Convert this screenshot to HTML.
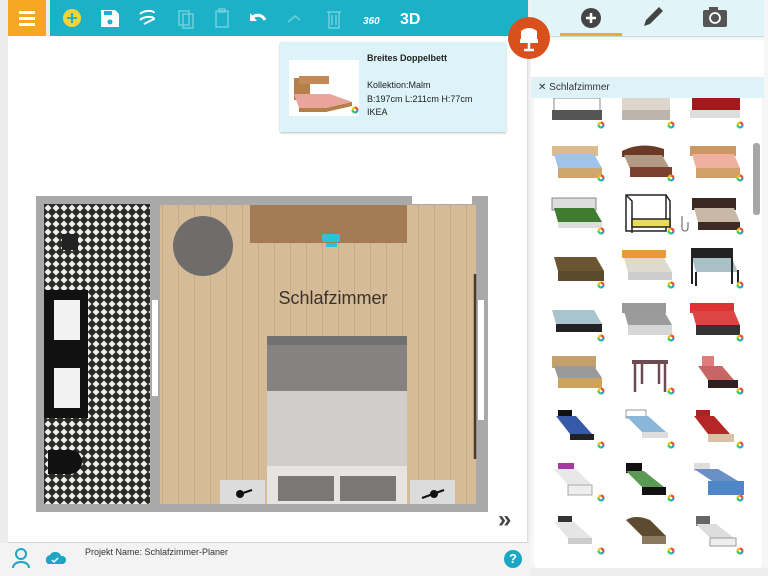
<!DOCTYPE html>
<html><head><meta charset="utf-8"><style>
*{margin:0;padding:0;box-sizing:border-box}
body{width:768px;height:576px;overflow:hidden;background:#ececec;font-family:"Liberation Sans",sans-serif;position:relative}
.a{position:absolute}
</style></head><body>
<div class="a" style="left:8px;top:36px;width:520px;height:507px;background:#fff;border-right:1px solid #ddd;border-bottom:1px solid #d4d4d4"></div>
<div class="a" style="left:0;top:543px;width:530px;height:33px;background:#f3f3f3"></div>
<div class="a" style="left:8px;top:0;width:38px;height:36px;background:#f7a823"></div>
<div class="a" style="left:19px;top:11px;width:16px;height:3px;background:#fff;box-shadow:0 6px 0 #fff,0 12px 0 #fff"></div>
<div class="a" style="left:50px;top:0;width:478px;height:36px;background:#1bb2c8"></div>
<svg class="a" style="left:50px;top:0" width="478" height="36">
 <circle cx="22" cy="18" r="9" fill="#f3d33b"/><path d="M22 13v10M17 18h10" stroke="#1bb2c8" stroke-width="2"/>
 <path d="M51 10h14l4 4v13h-18z" fill="#fff"/><rect x="54" y="11" width="8" height="4" fill="#1bb2c8"/><circle cx="60" cy="22" r="2.5" fill="#1bb2c8"/>
 <path d="M90 14c4-4 14-4 14-1M90 20c4-4 14-4 14-1l-10 5" stroke="#fff" stroke-width="2" fill="none"/>
 <g stroke="#6fd0de" stroke-width="1.5" fill="none"><rect x="129" y="11" width="10" height="14"/><rect x="133" y="14" width="10" height="14"/>
 <rect x="166" y="11" width="12" height="16"/><rect x="169" y="9" width="6" height="3"/>
 <path d="M238 22l7-6 5 4" /><path d="M279 12v16h10V12zM277 12h14M282 15v10M286 15v10"/></g>
 <path d="M202 18c3-4 10-4 13 2" stroke="#fff" stroke-width="3" fill="none"/><path d="M200 13v8h7z" fill="#fff"/>
 <text x="313" y="24" font-size="10" font-style="italic" fill="#fff" font-weight="bold">360</text>
 <text x="350" y="24" font-size="16" fill="#fff" font-weight="bold">3D</text>
</svg>
<div class="a" style="left:530px;top:0;width:238px;height:576px;background:#f6f6f6"></div>
<div class="a" style="left:531px;top:0;width:233px;height:37px;background:#e1f4f8;border-bottom:1px solid #c9d9dd"></div>
<div class="a" style="left:560px;top:33px;width:62px;height:3px;background:#f0a92d"></div>
<svg class="a" style="left:530px;top:0" width="238" height="100">
 <circle cx="61" cy="18" r="10" fill="#444"/><path d="M61 13v10M56 18h10" stroke="#fff" stroke-width="2.5"/>
 <path d="M114 26l2-6 13-13 4 4-13 13z" fill="#444"/>
 <rect x="173" y="10" width="24" height="17" rx="2" fill="#555"/><rect x="179" y="7" width="9" height="4" fill="#555"/><circle cx="185" cy="18" r="5" fill="none" stroke="#fff" stroke-width="1.8"/>
 <g fill="#2bb0c6"><rect x="33" y="50" width="5" height="4"/><rect x="40" y="50" width="5" height="4"/><rect x="47" y="50" width="5" height="4"/><rect x="33" y="56" width="5" height="4"/><rect x="40" y="56" width="5" height="4"/><rect x="47" y="56" width="5" height="4"/><rect x="33" y="62" width="5" height="4"/></g>
 <path d="M82 54c0-6 8-6 9-1 1-5 9-5 9 1 0 5-9 10-9 12-0-2-9-7-9-12z" fill="none" stroke="#444" stroke-width="2"/>
 <circle cx="207" cy="56" r="6" fill="none" stroke="#444" stroke-width="2.2"/><path d="M211 60l5 5" stroke="#444" stroke-width="2.5"/>
</svg>
<div class="a" style="left:531px;top:40px;width:233px;height:37px;background:#fff"></div>
<div class="a" style="left:531px;top:77px;width:233px;height:21px;background:#dff2f7;font-size:10px;color:#333;line-height:21px;padding-left:7px">✕ Schlafzimmer</div>
<div class="a" style="left:534px;top:98px;width:228px;height:470px;background:#fff;border-radius:0 0 4px 4px"></div>
<div class="a" style="left:753px;top:143px;width:7px;height:72px;background:#a6a6a6;border-radius:3px"></div>
<div class="a" style="left:530px;top:568px;width:238px;height:8px;background:#eee"></div>
<svg class="a" style="left:534px;top:98px" width="218" height="470">
<defs>
<g id="w"><circle r="3.5" fill="#f1c40f"/><path d="M0 0L0-3.5A3.5 3.5 0 0 1 3.5 0z" fill="#e74c3c"/><path d="M0 0L3.5 0A3.5 3.5 0 0 1 0 3.5z" fill="#3498db"/><path d="M0 0L0 3.5A3.5 3.5 0 0 1-3.5 0z" fill="#2ecc71"/><circle r="1.3" fill="#fff"/></g>
</defs>
<g transform="translate(18,0)"><rect x="2" y="0" width="46" height="14" fill="#fff" stroke="#888"/><rect x="0" y="12" width="50" height="10" fill="#555"/></g>
<g transform="translate(88,0)"><rect x="0" y="0" width="48" height="14" fill="#ddd6cc"/><rect x="0" y="12" width="48" height="10" fill="#bdb5ab"/></g>
<g transform="translate(156,0)"><rect x="2" y="0" width="48" height="14" fill="#9e1c1c"/><rect x="0" y="12" width="50" height="8" fill="#ddd"/></g>
<use href="#w" x="67" y="27"/><use href="#w" x="137" y="27"/><use href="#w" x="206" y="27"/>
<g transform="translate(18,48)"><rect x="0" y="0" width="46" height="10" fill="#d9bb8c"/><path d="M2 8h40l8 14H6z" fill="#9fc3ea"/><rect x="6" y="22" width="44" height="10" fill="#cfa66e"/></g>
<g transform="translate(88,45)"><path d="M0 8q20-10 42-2v8H0z" fill="#6a3a26"/><path d="M2 12h38l8 14H8z" fill="#b39a86"/><rect x="8" y="24" width="42" height="10" fill="#7b4030"/></g>
<g transform="translate(156,48)"><rect x="0" y="0" width="46" height="10" fill="#cc9665"/><path d="M2 8h42l6 14H6z" fill="#eeb1a0"/><rect x="6" y="22" width="44" height="10" fill="#d29f6a"/></g>
<use href="#w" x="67" y="80"/><use href="#w" x="137" y="80"/><use href="#w" x="206" y="80"/>
<g transform="translate(18,100)"><rect x="0" y="0" width="44" height="12" fill="#ddd" stroke="#888"/><path d="M2 10h40l8 14H6z" fill="#3f7c30"/><rect x="6" y="24" width="44" height="6" fill="#ddd"/></g>
<g transform="translate(92,97)" stroke="#222" stroke-width="1.5" fill="none"><rect x="0" y="0" width="40" height="36"/><path d="M0 0l6 6v32M40 0l4 6v32"/><path d="M6 24h38v8H6z" fill="#e9dc58"/></g>
<g transform="translate(158,100)"><rect x="0" y="0" width="44" height="12" fill="#3a2a22"/><path d="M2 10h40l6 14H6z" fill="#c8b8a6"/><rect x="6" y="24" width="42" height="8" fill="#3d2a22"/></g>
<use href="#w" x="67" y="133"/><use href="#w" x="137" y="133"/><use href="#w" x="206" y="133"/>
<path d="M148 118v12c0 4 6 4 6 0v-6" stroke="#555" fill="#fff"/>
<g transform="translate(18,155)"><path d="M2 4h42l8 14H6z" fill="#6b5532"/><rect x="6" y="18" width="46" height="10" fill="#5c4a2c"/></g>
<g transform="translate(88,152)"><rect x="0" y="0" width="44" height="8" fill="#e89a33"/><path d="M2 8h40l8 14H6z" fill="#dedad0"/><rect x="6" y="22" width="44" height="8" fill="#ccc"/></g>
<g transform="translate(156,150)" ><rect x="2" y="0" width="40" height="10" fill="#222"/><path d="M2 10h40l6 14H6z" fill="#a9c1c4"/><path d="M2 0v36M42 0v36M48 22v14M6 24v14" stroke="#222" stroke-width="2"/></g>
<use href="#w" x="67" y="187"/><use href="#w" x="137" y="187"/><use href="#w" x="206" y="187"/>
<g transform="translate(16,208)"><path d="M2 4h42l8 14H6z" fill="#a9c4cc"/><rect x="6" y="18" width="46" height="8" fill="#222"/></g>
<g transform="translate(88,205)"><rect x="0" y="0" width="44" height="10" fill="#999"/><path d="M2 8h40l8 14H6z" fill="#9b9b9b"/><rect x="6" y="22" width="44" height="10" fill="#d6d6d6"/></g>
<g transform="translate(156,205)"><rect x="0" y="0" width="44" height="10" fill="#d33"/><path d="M2 8h42l6 14H6z" fill="#d44"/><rect x="6" y="22" width="44" height="10" fill="#333"/></g>
<use href="#w" x="67" y="240"/><use href="#w" x="137" y="240"/><use href="#w" x="206" y="240"/>
<g transform="translate(18,258)"><rect x="0" y="0" width="44" height="12" fill="#c4a16c"/><path d="M2 10h40l8 12H6z" fill="#9a9a9a"/><rect x="6" y="22" width="44" height="10" fill="#cda15e"/></g>
<g transform="translate(98,262)" stroke="#6e4a52" stroke-width="2.5"><path d="M0 2h36" stroke-width="4"/><path d="M3 4v28M33 4v28M10 4v20M27 4v20"/></g>
<g transform="translate(164,258)"><rect x="4" y="0" width="12" height="10" fill="#e27b7b"/><path d="M0 10h24l12 14H10z" fill="#c96565"/><rect x="10" y="24" width="30" height="8" fill="#2e2020"/></g>
<use href="#w" x="67" y="293"/><use href="#w" x="137" y="293"/><use href="#w" x="206" y="293"/>
<g transform="translate(22,312)"><rect x="2" y="0" width="14" height="8" fill="#111"/><path d="M0 6h20l16 18H14z" fill="#3659a8"/><rect x="14" y="24" width="24" height="6" fill="#222"/></g>
<g transform="translate(92,312)"><rect x="0" y="0" width="20" height="8" fill="#fff" stroke="#999"/><path d="M0 6h22l18 16H16z" fill="#8ab7d9"/><rect x="16" y="22" width="26" height="6" fill="#ddd"/></g>
<g transform="translate(160,312)"><rect x="2" y="0" width="14" height="8" fill="#a22"/><path d="M0 6h20l16 18H14z" fill="#b52626"/><rect x="14" y="24" width="26" height="8" fill="#d6c2a4"/></g>
<use href="#w" x="67" y="347"/><use href="#w" x="137" y="347"/><use href="#w" x="206" y="347"/>
<g transform="translate(20,365)"><rect x="4" y="0" width="16" height="8" fill="#a33aa4"/><path d="M0 6h22l16 16H14z" fill="#e8e8e8"/><rect x="14" y="22" width="24" height="10" fill="#eee" stroke="#aaa"/></g>
<g transform="translate(92,365)"><rect x="0" y="0" width="16" height="10" fill="#111"/><path d="M0 8h18l20 16H16z" fill="#5a9a55"/><rect x="16" y="24" width="24" height="8" fill="#111"/></g>
<g transform="translate(160,365)"><rect x="0" y="0" width="16" height="8" fill="#ddd"/><path d="M0 6h24l20 12H18z" fill="#6a8fc5"/><rect x="14" y="18" width="36" height="14" fill="#4e86c8"/></g>
<use href="#w" x="67" y="400"/><use href="#w" x="137" y="400"/><use href="#w" x="206" y="400"/>
<g transform="translate(20,418)"><rect x="4" y="0" width="14" height="8" fill="#333"/><path d="M0 6h20l18 16H14z" fill="#e5e5e5"/><rect x="14" y="22" width="24" height="6" fill="#ccc"/></g>
<g transform="translate(92,418)"><path d="M0 4q10-6 24 0l16 16H16z" fill="#5e4a2e"/><rect x="16" y="20" width="24" height="8" fill="#8c7a60"/></g>
<g transform="translate(162,418)"><rect x="0" y="0" width="14" height="10" fill="#666"/><path d="M0 8h20l18 14H14z" fill="#ddd"/><rect x="14" y="22" width="26" height="8" fill="#eee" stroke="#999"/></g>
<use href="#w" x="67" y="453"/><use href="#w" x="137" y="453"/><use href="#w" x="206" y="453"/>
</svg>
<div class="a" style="left:508px;top:17px;width:42px;height:42px;border-radius:50%;background:#d9501d"></div>
<svg class="a" style="left:508px;top:17px" width="42" height="42"><path d="M13 14q8-6 16 0v8H13z" fill="#fff"/><rect x="12" y="22" width="18" height="4" fill="#fff"/><path d="M21 26v6M16 33h10" stroke="#fff" stroke-width="2.5"/></svg>
<div class="a" style="left:280px;top:42px;width:226px;height:90px;background:#dcf3f8;box-shadow:0 1px 2px #bbb"></div>
<svg class="a" style="left:289px;top:60px" width="70" height="56"><rect width="70" height="56" fill="#fff"/><rect x="5" y="18" width="16" height="22" fill="#b57f4a"/><rect x="10" y="16" width="30" height="8" fill="#c48a55"/><path d="M5 34h36l22 8-26 6H10z" fill="#e9a59c"/><path d="M10 48h27l26-6v4l-26 6H10z" fill="#b57f4a"/><use href="#w" x="66" y="50"/></svg>
<div class="a" style="left:367px;top:52px;font-size:9px;line-height:13.5px;color:#222"><b>Breites Doppelbett</b><br><br>Kollektion:Malm<br>B:197cm L:211cm H:77cm<br>IKEA</div>
<svg class="a" style="left:36px;top:196px" width="452" height="316">
<defs>
<pattern id="t" width="8" height="8" patternUnits="userSpaceOnUse"><rect width="8" height="8" fill="#2a2a2a"/><path d="M4 0.5l3.5 3.5-3.5 3.5-3.5-3.5z" fill="#f0f0ea"/></pattern>
<pattern id="wd" width="16" height="300" patternUnits="userSpaceOnUse"><rect width="16" height="300" fill="#d6bb98"/><rect x="14" width="1" height="300" fill="#c9ab88"/></pattern>
</defs>
<rect width="452" height="316" fill="#a9a9a9"/>
<rect x="8" y="8" width="106" height="300" fill="url(#t)"/>
<rect x="124" y="9" width="316" height="299" fill="url(#wd)"/>
<rect x="376" y="0" width="60" height="8" fill="#fff"/>
<rect x="442" y="104" width="6" height="120" fill="#fff"/>
<rect x="116" y="104" width="6" height="96" fill="#fff"/>
<rect x="214" y="9" width="157" height="38" fill="#a37c55"/>
<circle cx="167" cy="50" r="30" fill="#6f6d6b"/>
<rect x="286" y="38" width="18" height="8" rx="2" fill="#2ec1dd"/><rect x="290" y="47" width="11" height="4" fill="#2ec1dd"/>
<text x="297" y="108" font-size="18" text-anchor="middle" fill="#3a332c">Schlafzimmer</text>
<rect x="231" y="140" width="140" height="168" fill="#d0cecb"/>
<rect x="231" y="140" width="140" height="9" fill="#717171"/>
<rect x="231" y="149" width="140" height="46" fill="#858381"/>
<rect x="231" y="270" width="140" height="38" fill="#e6e4e1"/>
<rect x="242" y="280" width="56" height="25" fill="#7a7876"/><rect x="304" y="280" width="56" height="25" fill="#7a7876"/>
<rect x="184" y="284" width="45" height="24" fill="#dcdcdc"/><rect x="374" y="284" width="45" height="24" fill="#dcdcdc"/>
<circle cx="204" cy="298" r="4" fill="#111"/><path d="M204 298l12-4" stroke="#111" stroke-width="2"/>
<circle cx="398" cy="298" r="4" fill="#111"/><path d="M386 302l22-8" stroke="#111" stroke-width="2"/>
<path d="M439 78v185" stroke="#4a3a2c" stroke-width="2.5"/>
<rect x="8" y="94" width="44" height="128" fill="#111"/>
<rect x="18" y="104" width="26" height="40" fill="#f2f2f2"/><rect x="18" y="172" width="26" height="40" fill="#f2f2f2"/>
<path d="M12 254h22a12 12 0 0 1 0 24H12z" fill="#111"/>
<rect x="26" y="38" width="16" height="16" fill="#222"/>
</svg>
<div class="a" style="left:498px;top:508px;font-size:24px;font-weight:bold;color:#444;line-height:24px">»</div>
<svg class="a" style="left:10px;top:546px" width="60" height="26"><circle cx="11" cy="8" r="5" fill="none" stroke="#1ba7c4" stroke-width="2"/><path d="M3 22c0-8 16-8 16 0" fill="none" stroke="#1ba7c4" stroke-width="2"/><path d="M38 18a5 5 0 0 1 2-9 6 6 0 0 1 11 1 4 4 0 0 1 2 8z" fill="#1ba7c4"/><path d="M42 14l2 2 4-4" stroke="#fff" stroke-width="1.5" fill="none"/></svg>
<div class="a" style="left:85px;top:547px;font-size:9px;color:#333">Projekt Name: Schlafzimmer-Planer</div>
<div class="a" style="left:504px;top:550px;width:18px;height:18px;border-radius:50%;background:#1ba7c4;color:#fff;font-size:13px;font-weight:bold;text-align:center;line-height:18px">?</div>
</body></html>
